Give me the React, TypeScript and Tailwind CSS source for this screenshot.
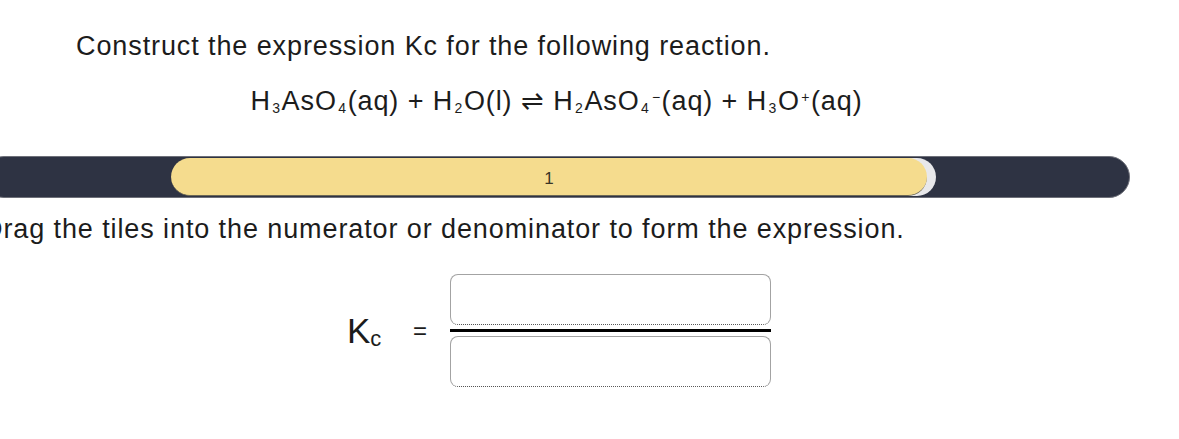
const Sub = ({ children }: { children: React.ReactNode }) => (
	<span className="relative top-[3px] mx-[1.5px] text-[14px] tracking-normal">{children}</span>
)

const Sup = ({ children }: { children: React.ReactNode }) => (
	<span className="relative -top-[8px] mx-[1.5px] text-[14px] tracking-normal">{children}</span>
)

const DropBox = () => (
	<div className="h-[51px] w-[321px] rounded-[8px] border border-[#a3a3a3] border-b-[#555] [border-bottom-style:dotted]" />
)

export default function App() {
	return (
		<div className="h-[439px] w-[1179px] overflow-hidden bg-white font-['Liberation_Sans',Arial,sans-serif] text-[#1c1c1c]">
			<div className="-ml-[17px] w-[1147px]">
				<p className="pl-[93px] pt-[30px] text-[27px] leading-[32px] tracking-[0.9px]">
					Construct the expression Kc for the following reaction.
				</p>
				<p className="mt-[23px] text-center text-[27px] leading-[32px] tracking-[0.9px]">
					H<Sub>3</Sub>AsO<Sub>4</Sub>(aq) + H<Sub>2</Sub>O(l) ⇌ H<Sub>2</Sub>AsO<Sub>4</Sub>
					<Sup>−</Sup>(aq) + H<Sub>3</Sub>O<Sup>+</Sup>(aq)
				</p>

				<div className="mt-[35px] flex h-[42px] items-center rounded-full border border-[#6e7079] bg-[#2e3343] pl-[187px]">
					<div className="flex h-[38px] w-[756px] items-center justify-center rounded-full border-b border-[#6b6755] bg-[#f5dc8e] pt-[4px] shadow-[9px_0_0_#e8e8ea]">
						<span className="text-[17px] text-[#3a3526]">1</span>
					</div>
				</div>

				<p className="mt-[15px] text-[27px] leading-[32px] tracking-[0.9px]">
					Drag the tiles into the numerator or denominator to form the expression.
				</p>

				<div className="mt-[29px] flex items-center pl-[364px]">
					<div className="flex w-[66px] items-baseline">
						<span className="text-[35px] leading-none">K</span>
						<span className="relative top-[3px] text-[22px] leading-none">c</span>
					</div>
					<span className="w-[37px] text-[24px] leading-none">=</span>
					<div className="flex flex-col gap-[4px]">
						<DropBox />
						<div className="h-[3px] w-[321px] bg-black" />
						<DropBox />
					</div>
				</div>
			</div>
		</div>
	)
}
